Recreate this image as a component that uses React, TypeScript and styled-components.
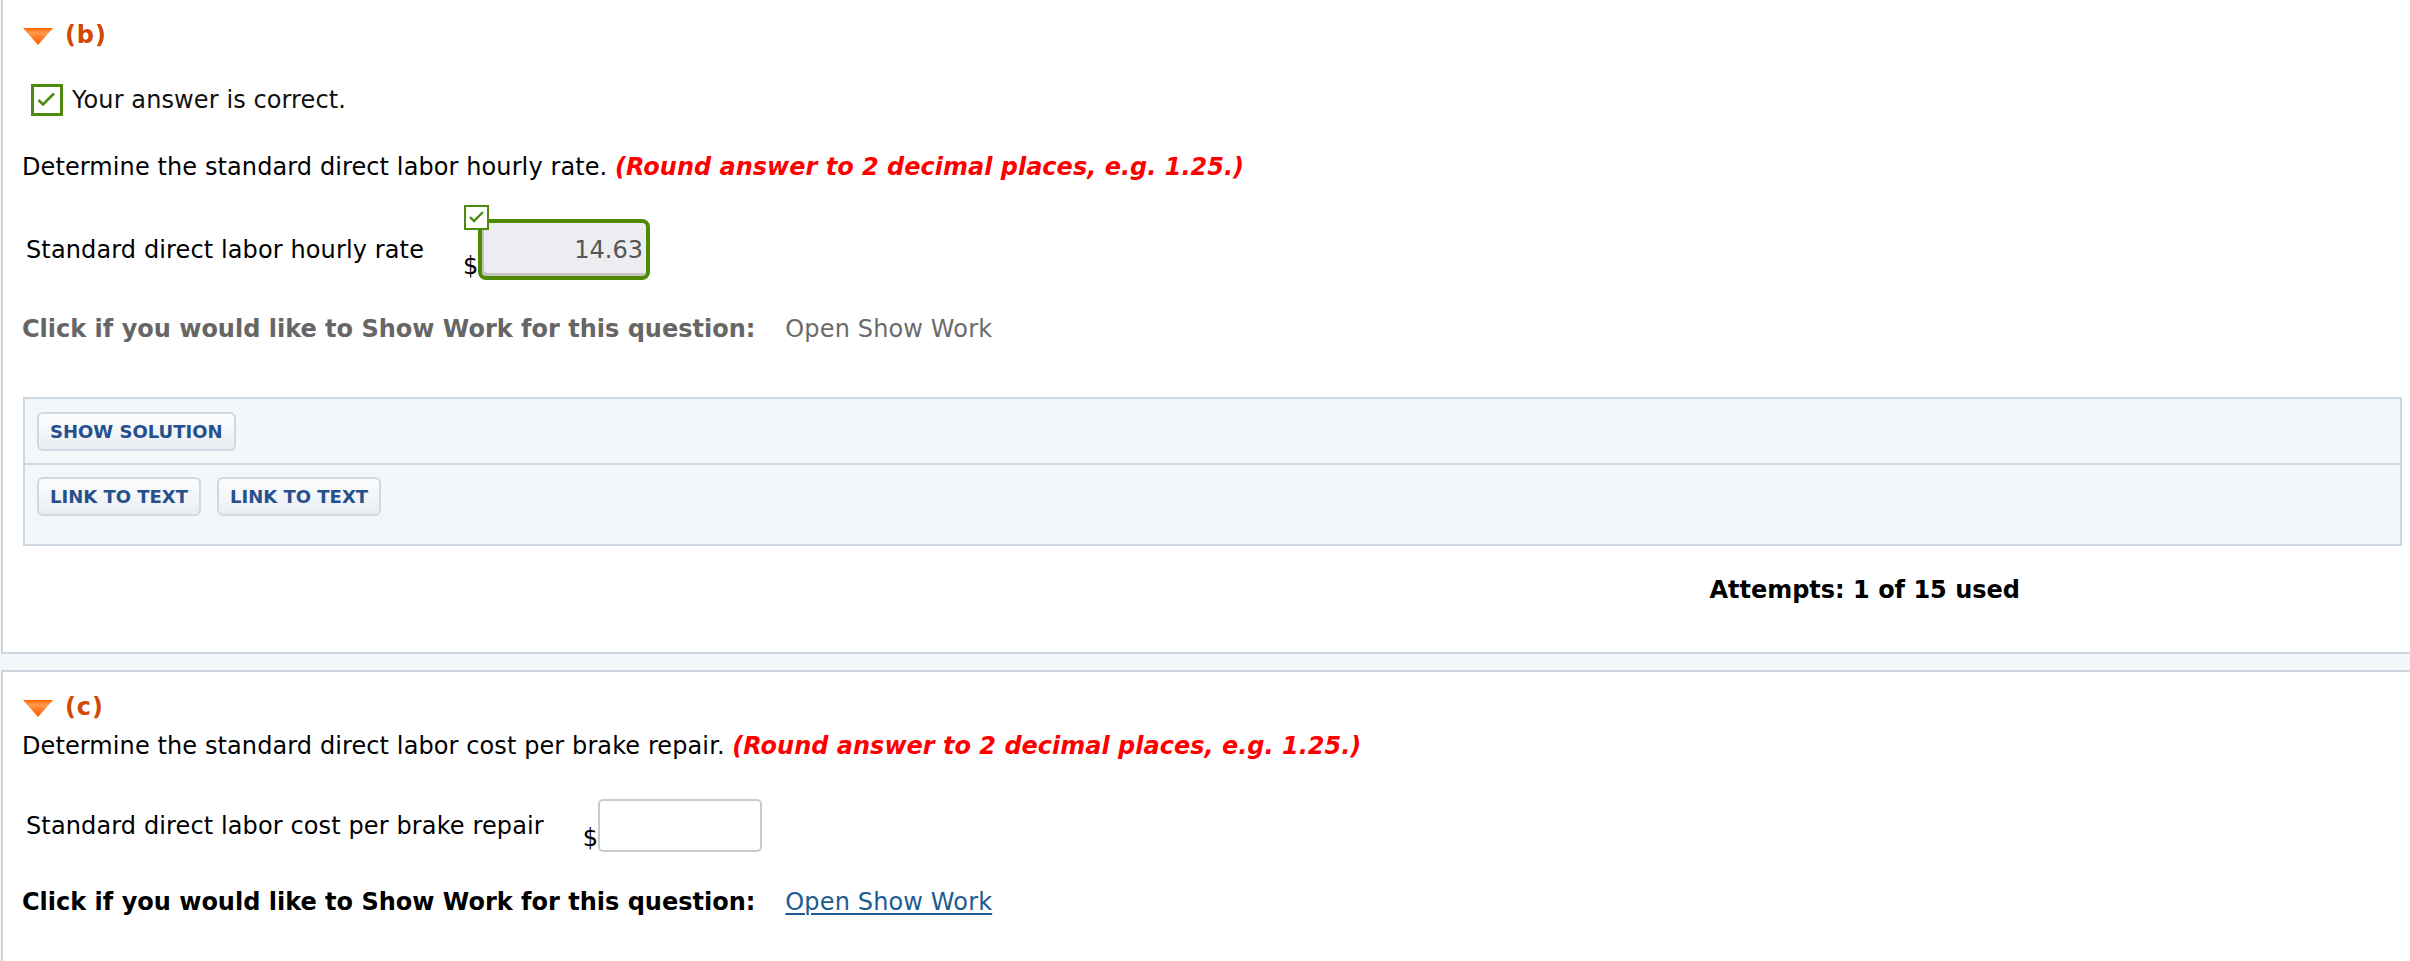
import React from "react";
import styled, { createGlobalStyle } from "styled-components";

const GlobalStyle = createGlobalStyle`
  html, body {
    margin: 0;
    padding: 0;
    background: #f4f7fa;
    overflow: hidden;
  }
  body {
    font-family: "DejaVu Sans", Verdana, sans-serif;
    font-size: 24px;
    line-height: 28px;
    color: #000;
  }
`;

const Page = styled.div`
  width: 2410px;
  height: 961px;
  display: flex;
  flex-direction: column;
  overflow: hidden;
  background: #f4f7fa;
`;

const Card = styled.section<{ $first?: boolean }>`
  display: flex;
  flex-direction: column;
  align-items: flex-start;
  background: #fff;
  margin-left: 1px;
  border-left: 2px solid #cdd5e0;
  ${(p) =>
    p.$first
      ? `border-bottom: 2px solid #cdd5e0; padding: 21px 8px 48px 19px;`
      : `border-top: 2px solid #cdd5e0; margin-top: 16px; padding: 21px 8px 200px 19px; flex: 1;`}
`;

const PartHeader = styled.div<{ $mb: number }>`
  display: flex;
  align-items: flex-start;
  gap: 11px;
  height: 28px;
  margin-bottom: ${(p) => p.$mb}px;
`;

const Arrow = styled.svg`
  margin-top: 7px;
  display: block;
`;

const PartLabel = styled.span`
  font-weight: bold;
  color: #d04a02;
  line-height: 28px;
  letter-spacing: 0.9px;
`;

const StatusRow = styled.div`
  display: flex;
  align-items: center;
  gap: 9px;
  height: 32px;
  padding-left: 9px;
  margin-bottom: 37px;
`;

const StatusBox = styled.span<{ $size: number }>`
  box-sizing: border-box;
  width: ${(p) => p.$size}px;
  height: ${(p) => p.$size}px;
  border: ${(p) => (p.$size > 28 ? 3 : 2)}px solid #4f8a10;
  background: #fff;
  display: flex;
  align-items: center;
  justify-content: center;
`;

const StatusText = styled.span`
  color: #111;
  letter-spacing: 0.1px;
`;

const Question = styled.p<{ $mb: number }>`
  margin: 0 0 ${(p) => p.$mb}px 0;
  line-height: 28px;
  white-space: nowrap;
  letter-spacing: 0.1px;
`;

const Hint = styled.span`
  color: #ff0000;
  font-weight: bold;
  font-style: italic;
  letter-spacing: 0;
`;

const AnswerRow = styled.div<{ $mb: number }>`
  display: flex;
  align-items: center;
  margin-bottom: ${(p) => p.$mb}px;
`;

const AnswerLabel = styled.span`
  padding-left: 4px;
  margin-right: 39px;
  white-space: nowrap;
  letter-spacing: 0.12px;
`;

const InputGroup = styled.div`
  display: flex;
  align-items: flex-end;
`;

const Dollar = styled.span`
  line-height: 28px;
  width: 15px;
`;

const InputWrap = styled.div`
  position: relative;
  display: flex;
`;

const CornerCheck = styled.div`
  position: absolute;
  left: -14px;
  top: -14px;
  z-index: 2;
`;

const AnswerInput = styled.input<{ $correct?: boolean }>`
  box-sizing: border-box;
  font-family: "DejaVu Sans", Verdana, sans-serif;
  font-size: 24px;
  text-align: right;
  outline: none;
  ${(p) =>
    p.$correct
      ? `
    width: 172px;
    height: 61px;
    border: 4px solid #4f8a00;
    border-radius: 8px;
    background: #ecedf0;
    color: #555;
    padding: 0 3px 0 0;
    box-shadow: inset 2px -3px 0 #c3c3c3;
  `
      : `
    width: 164px;
    height: 53px;
    border: 2px solid #cacaca;
    border-radius: 5px;
    background: #fff;
    color: #000;
    padding: 0 6px;
  `}
`;

const ShowWork = styled.div<{ $mb: number }>`
  display: flex;
  align-items: baseline;
  line-height: 28px;
  margin-bottom: ${(p) => p.$mb}px;
  white-space: nowrap;
`;

const ShowWorkPrompt = styled.span<{ $muted?: boolean }>`
  font-weight: bold;
  color: ${(p) => (p.$muted ? "#666666" : "#000")};
`;

const ShowWorkLink = styled.a<{ $muted?: boolean }>`
  margin-left: 30px;
  letter-spacing: 0.14px;
  color: ${(p) => (p.$muted ? "#6b6b6b" : "#1d5b92")};
  text-decoration: ${(p) => (p.$muted ? "none" : "underline")};
  text-underline-offset: 3px;
  text-decoration-thickness: 2px;
  cursor: pointer;
`;

const Panel = styled.div`
  box-sizing: border-box;
  align-self: stretch;
  margin-left: 1px;
  background: #f4f7fa;
  border: 2px solid #cdd5e0;
  margin-bottom: 30px;
`;

const PanelRow = styled.div<{ $last?: boolean }>`
  display: flex;
  gap: 16px;
  padding: ${(p) => (p.$last ? "12px 12px 28px" : "13px 12px 12px")};
  border-bottom: ${(p) => (p.$last ? "none" : "2px solid #cdd5e0")};
`;

const PanelButton = styled.button`
  box-sizing: border-box;
  height: 39px;
  padding: 0 11px;
  border: 2px solid #cfd8e3;
  border-radius: 6px;
  background: linear-gradient(#fdfdfe, #e9eef4);
  color: #26508c;
  font-family: "DejaVu Sans", Verdana, sans-serif;
  font-weight: bold;
  font-size: 18px;
  line-height: 20px;
  cursor: pointer;
`;

const Attempts = styled.div`
  align-self: stretch;
  display: flex;
  justify-content: flex-end;
  padding-right: 382px;
  font-weight: bold;
  line-height: 28px;
`;

const TriangleIcon: React.FC<{ id: string }> = ({ id }) => (
  <Arrow width="32" height="18" viewBox="0 0 32 18">
    <defs>
      <linearGradient id={id} x1="0" y1="0" x2="0" y2="1">
        <stop offset="0%" stopColor="#ff6400" />
        <stop offset="30%" stopColor="#ff9c4e" />
        <stop offset="60%" stopColor="#ff7a22" />
        <stop offset="100%" stopColor="#ff5a00" />
      </linearGradient>
    </defs>
    <polygon points="1,0 31,0 16,17" fill={`url(#${id})`} />
  </Arrow>
);

const CheckMark: React.FC<{ size: number }> = ({ size }) =>
  size > 28 ? (
    <svg width="26" height="26" viewBox="0 0 26 26">
      <path d="M4.5 13 L9 17.5 L20 6.5" fill="none" stroke="#4f8a10" strokeWidth="2.6" />
    </svg>
  ) : (
    <svg width="21" height="21" viewBox="0 0 21 21">
      <path d="M4 10 L8 14 L17 5" fill="none" stroke="#4f8a10" strokeWidth="2.4" />
    </svg>
  );

export default function App() {
  return (
    <>
      <GlobalStyle />
      <Page>
        <Card $first>
          <PartHeader $mb={35}>
            <TriangleIcon id="triB" />
            <PartLabel>(b)</PartLabel>
          </PartHeader>
          <StatusRow>
            <StatusBox $size={32}>
              <CheckMark size={32} />
            </StatusBox>
            <StatusText>Your answer is correct.</StatusText>
          </StatusRow>
          <Question $mb={38}>
            Determine the standard direct labor hourly rate.{" "}
            <Hint>(Round answer to 2 decimal places, e.g. 1.25.)</Hint>
          </Question>
          <AnswerRow $mb={35}>
            <AnswerLabel>Standard direct labor hourly rate</AnswerLabel>
            <InputGroup>
              <Dollar>$</Dollar>
              <InputWrap>
                <CornerCheck>
                  <StatusBox $size={25}>
                    <CheckMark size={25} />
                  </StatusBox>
                </CornerCheck>
                <AnswerInput $correct readOnly value="14.63" />
              </InputWrap>
            </InputGroup>
          </AnswerRow>
          <ShowWork $mb={54}>
            <ShowWorkPrompt $muted>Click if you would like to Show Work for this question:</ShowWorkPrompt>
            <ShowWorkLink $muted>Open Show Work</ShowWorkLink>
          </ShowWork>
          <Panel>
            <PanelRow>
              <PanelButton>SHOW SOLUTION</PanelButton>
            </PanelRow>
            <PanelRow $last>
              <PanelButton>LINK TO TEXT</PanelButton>
              <PanelButton>LINK TO TEXT</PanelButton>
            </PanelRow>
          </Panel>
          <Attempts>Attempts: 1 of 15 used</Attempts>
        </Card>
        <Card>
          <PartHeader $mb={11}>
            <TriangleIcon id="triC" />
            <PartLabel>(c)</PartLabel>
          </PartHeader>
          <Question $mb={39}>
            Determine the standard direct labor cost per brake repair.{" "}
            <Hint>(Round answer to 2 decimal places, e.g. 1.25.)</Hint>
          </Question>
          <AnswerRow $mb={36}>
            <AnswerLabel>Standard direct labor cost per brake repair</AnswerLabel>
            <InputGroup>
              <Dollar>$</Dollar>
              <InputWrap>
                <AnswerInput defaultValue="" />
              </InputWrap>
            </InputGroup>
          </AnswerRow>
          <ShowWork $mb={0}>
            <ShowWorkPrompt>Click if you would like to Show Work for this question:</ShowWorkPrompt>
            <ShowWorkLink>Open Show Work</ShowWorkLink>
          </ShowWork>
        </Card>
      </Page>
    </>
  );
}
